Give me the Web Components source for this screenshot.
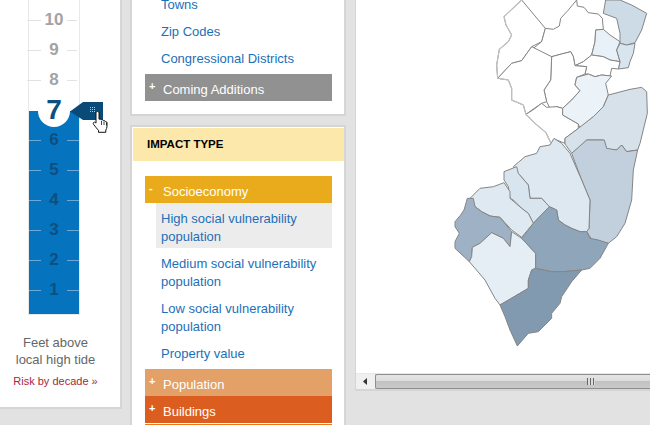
<!DOCTYPE html>
<html>
<head>
<meta charset="utf-8">
<title>Surging Seas</title>
<style>
  html, body { margin: 0; height: 425px; overflow: hidden; }
  body {
    display: flex;
    align-items: flex-start;
    gap: 9px;
    width: 650px;
    background: #e2e2e2;
    font-family: "Liberation Sans", Arial, sans-serif;
  }
  .col { display: flex; flex-direction: column; gap: 9px; width: 216px; height: 425px; overflow: hidden; flex: none; }
</style>
</head>
<body>
<risk-gauge level="7"></risk-gauge>

<div class="col">
  <side-panel style="margin-top:-13px">
    <nav-link>Towns</nav-link>
    <nav-link>Zip Codes</nav-link>
    <nav-link>Congressional Districts</nav-link>
    <nav-bar color="#919191">Coming Additions</nav-bar>
  </side-panel>
  <side-panel heading="IMPACT TYPE">
    <nav-bar color="#e9ab1b" open>Socioeconomy</nav-bar>
    <nav-link selected>High social vulnerability population</nav-link>
    <nav-link>Medium social vulnerability population</nav-link>
    <nav-link>Low social vulnerability population</nav-link>
    <nav-link>Property value</nav-link>
    <nav-bar color="#e3a067">Population</nav-bar>
    <nav-bar color="#db5e20" flush>Buildings</nav-bar>
    <nav-bar color="#e87a1d" style="margin-top:1px"></nav-bar>
  </side-panel>
</div>

<map-view></map-view>

<script>
// Sea level gauge with the draggable handle
class RiskGauge extends HTMLElement {
  connectedCallback() {
    const level = parseInt(this.getAttribute('level')) || 7;
    let rows = '';
    for (let n = 10; n >= 1; n--) {
      const cls = n === level ? 'row current' : (n > level ? 'row dry' : 'row wet');
      rows += `<div class="${cls}"><i></i><b>${n}</b><i></i></div>`;
    }
    this.attachShadow({ mode: 'open' }).innerHTML = `
<style>
  :host { display: block; flex: none; width: 120px; height: 407px; background: #fff;
    border-right: 2px solid #d5d5d5; border-bottom: 2px solid #d5d5d5;
    margin-right: -1px; color: #666; }
  .scale { position: relative; box-sizing: border-box; width: 52px; height: 315px; margin-left: 28px; padding: 5px 0 10px;
    border: solid #e8e8e8; border-width: 0 1px 1px;
    background: linear-gradient(#fff 111px, #0573bd 111px); }
  .row { display: grid; grid-template-columns: 12px 1fr 12px; align-items: center; height: 30px; }
  .row b { text-align: center; font-size: 17px; line-height: 30px; color: #0d4f80; }
  .row i { display: block; height: 1px; background: #6aa8d6; }
  .row.dry b { color: #a3a3a3; }
  .row.dry i { background: #e2e2e2; }
  .row.dry i:first-child { margin-left: -2px; }
  .row.dry i:last-child { margin-right: 2px; }
  .row.current i { visibility: hidden; }
  .row.current b { position: relative; z-index: 2; font-size: 28px; }
  .dot { position: absolute; left: 9px; top: 95px; width: 32px; height: 32px; border-radius: 50%; background: #fff; }
  .handle { position: absolute; left: 41px; top: 102px; }
  .cursor { position: absolute; left: 62px; top: 110px; }
  .caption { margin: 19px 0 0; padding-right: 9px; text-align: center; font-size: 13px; line-height: 17px; }
  .link { margin: 6px 0 0; padding-right: 9px; text-align: center; font-size: 11px; line-height: 14px; color: #a3283c; }
</style>
<div class="scale">
  <div class="dot"></div>
  ${rows}
  <svg class="handle" width="34" height="18" viewBox="0 0 34 18">
    <path d="M0 9.500 13 0H33V18H13Z" fill="#0a4a78"/>
    <g fill="#a9c6dc"><rect x="20" y="5" width="1" height="1"/><rect x="22" y="5" width="1" height="1"/><rect x="24" y="5" width="1" height="1"/>
    <rect x="20" y="7" width="1" height="1"/><rect x="22" y="7" width="1" height="1"/><rect x="24" y="7" width="1" height="1"/>
    <rect x="20" y="9" width="1" height="1"/><rect x="22" y="9" width="1" height="1"/><rect x="24" y="9" width="1" height="1"/></g>
  </svg>
  <svg class="cursor" width="20" height="24" viewBox="0 0 20 24">
    <path d="M6.500 1.500c1 0 1.500.7 1.500 1.700v6l1-.2c.8 0 1.200.3 1.400.8.8-.3 1.700 0 2 .8.8-.3 1.800.1 2 1 .8-.2 1.600.3 1.600 1.200v3.700c0 1.500-.7 2.500-1.200 3.500v2.300H7.500v-2c-1.500-1.500-3-3.500-5-6-.5-.8-.3-1.700.3-2 .7-.4 1.500 0 2.200.8V3.200c0-1 .5-1.700 1.500-1.700Z" fill="#fff" stroke="#111" stroke-width="1"/>
    <path d="M10.500 11v4M13 11.500v3.500M15.500 12.500v3" stroke="#111" stroke-width=".8" fill="none"/>
  </svg>
</div>
<p class="caption">Feet above<br>local high tide</p>
<p class="link">Risk by decade &raquo;</p>`;
  }
}
customElements.define('risk-gauge', RiskGauge);

// White card of the middle column
class SidePanel extends HTMLElement {
  constructor() {
    super();
    this.attachShadow({ mode: 'open' }).innerHTML = `
<style>
  :host { display: block; flex: none; box-sizing: border-box; background: #fff; border: 2px solid #d5d5d5; overflow: hidden; }
  :host([heading]) { height: 300px; border-bottom: 0; }
  header { margin: 1px 0 15px 1px; height: 33px; line-height: 33px; padding-left: 14px;
    background: #fde8ab; color: #000; font-size: 11.500px; font-weight: bold; }
  .body { display: flex; flex-direction: column; padding: 0 12px 13px 13px; }
</style>
<header></header>
<div class="body"><slot></slot></div>`;
  }

  connectedCallback() {
    const header = this.shadowRoot.querySelector('header');
    const heading = this.getAttribute('heading');
    if (heading) header.textContent = heading;
    else header.style.display = 'none';
  }
}
customElements.define('side-panel', SidePanel);

// Coloured accordion bar
class NavBar extends HTMLElement {
  connectedCallback() {
    const sign = this.hasAttribute('open') ? '-' : (this.textContent.trim() ? '+' : '');
    this.attachShadow({ mode: 'open' }).innerHTML = `
<style>
  :host { display: flex; flex: none; align-items: center; box-sizing: border-box; height: 27px; padding-top: 3px; color: #fff; font-size: 13px; margin-top: 4px; }
  :host([open]), :host([flush]) { margin-top: 0; }
  span { width: 18px; padding-left: 4px; box-sizing: border-box; font-size: 11px; font-weight: bold; margin-top: -6px; }
</style>
<span>${sign}</span><slot></slot>`;
    this.style.background = this.getAttribute('color');
  }
}
customElements.define('nav-bar', NavBar);

// Link row below a bar
class NavLink extends HTMLElement {
  constructor() {
    super();
    this.attachShadow({ mode: 'open' }).innerHTML = `
<style>
  :host { display: block; margin-left: 11px; padding: 7px 12px 2px 5px; font-size: 13px; line-height: 18px; color: #1c6fb8; }
  :host([selected]) { background: #ececec; }
</style>
<slot></slot>`;
  }
}
customElements.define('nav-link', NavLink);

// Choropleth of the counties, traced at 3x in page units from x=440
const COUNTIES = [
  ['#cddbe6', '497,0 490,40 530,55 540,100 540,130 560,135 585,128 605,90 620,40 575,15 540,0'],
  ['#fff', '245,0 316,85 305,125 275,140 245,182 215,190 173,235 170,195 178,148 205,125 215,105 198,75 192,50'],
  ['#fff', '316,85 340,88 358,78 362,55 385,30 410,0 412,18 432,22 445,38 475,42 487,55 490,88 467,90 465,125 455,165 430,185 405,197 400,170 392,155 365,162 335,170 300,162 280,145 305,125'],
  ['#e8f1f7', '467,90 490,88 510,105 540,125 530,150 540,185 510,180 490,170 455,165 465,125'],
  ['#d8e5ef', '530,150 540,130 560,135 585,130 580,160 570,185 565,203 535,207 540,185'],
  ['#fff', '430,185 455,165 490,170 510,180 540,185 535,207 515,205 510,228 485,225 465,230 445,222 435,222 440,200 405,197'],
  ['#fff', '335,170 365,162 392,155 400,170 405,197 440,200 435,222 410,232 405,255 420,272 395,300 368,325 350,320 330,325 320,305 312,270 332,240'],
  ['#fff', '173,235 215,190 245,182 275,140 335,170 332,240 312,270 320,305 305,310 283,325 258,343 250,315 215,300 215,265 205,240'],
  ['#fff', '258,343 283,327 305,310 320,322 350,320 368,325 368,345 415,372 415,385 375,415 375,430 345,418 333,430 318,398 285,370'],
  ['#ebf2f8', '410,232 445,222 465,230 485,225 515,228 497,250 505,285 490,320 460,350 420,385 415,372 368,345 368,325 395,300 420,272 405,255'],
  ['#d6e1ea', '505,285 570,268 605,262 620,275 622,340 600,430 593,450 560,455 545,435 530,450 500,448 490,420 440,420 420,440 395,460 375,432 375,415 415,385 460,350 490,320'],
  ['#c1d0dc', '395,460 440,420 493,420 500,445 530,450 545,435 560,455 593,450 580,510 575,600 555,670 530,710 505,730 475,722 455,718 440,695 447,685 450,600 425,540'],
  ['#dde8f1', '220,500 255,470 290,460 300,440 330,435 342,415 365,430 390,460 425,540 450,600 447,685 440,695 420,695 395,685 375,675 355,660 350,630 328,620 305,595 270,595 265,555 235,520'],
  ['#d8e4ee', '192,515 230,500 235,520 265,555 270,595 305,595 328,620 280,670 265,640 245,625 220,600 210,595 205,560 192,540'],
  ['#dfe9f2', '90,595 120,565 160,560 192,548 210,575 210,595 245,625 265,640 280,670 245,712 215,690 180,652 150,648 125,635 105,620'],
  ['#9fb1c4', '82,595 100,595 105,620 125,635 150,648 180,652 215,695 210,740 190,715 155,698 120,730 97,742 95,770 88,785 45,745 45,725 58,700 45,680 45,665 62,645 72,630'],
  ['#e6eef5', '88,785 95,770 97,742 120,730 155,698 190,715 210,740 215,695 245,715 287,760 287,805 275,810 265,840 265,865 180,915 165,895 135,840'],
  ['#8fa5ba', '245,715 280,670 328,620 350,630 355,660 375,675 395,685 420,695 440,695 450,715 475,720 505,730 480,775 450,805 425,810 370,815 335,815 310,810 287,805 287,760'],
  ['#829ab0', '180,915 265,865 265,840 275,810 287,805 335,815 370,815 425,810 395,845 365,890 360,910 335,940 335,955 295,995 265,1000 232,1038 210,990 195,950']
];
// the outer edge of the white counties is drawn lighter
const WEST_EDGE = '245,0 192,50 198,75 215,105 205,125 178,148 170,195 173,235 205,240 215,265 215,300 250,315 258,343 285,370 318,398 333,430';

class MapView extends HTMLElement {
  connectedCallback() {
    const shapes = COUNTIES.map(([fill, pts]) => `<polygon fill="${fill}" points="${pts}"/>`).join('');
    this.attachShadow({ mode: 'open' }).innerHTML = `
<style>
  :host { display: flex; flex-direction: column; flex: 1; height: 389px; background: #fff;
    border: solid #d5d5d5; border-width: 0 0 2px 1px; }
  .canvas { flex: 1; min-height: 0; overflow: hidden; padding-left: 84px; }
  svg { display: block; }
  .bar { display: flex; flex: none; height: 16px; box-sizing: border-box; background: #f0f0f0; border-top: 1px solid #e8e8e8; }
  .arrow { width: 19px; display: flex; align-items: center; justify-content: center; }
  .thumb { flex: 1; display: flex; align-items: center; padding-left: 211px;
    border: 1px solid #8e8e8e; border-right: 0; border-radius: 2px 0 0 2px;
    background: linear-gradient(#e4e4e4, #dcdcdc 45%, #c2c2c2 50%, #c9c9c9); }
  .grip { width: 8px; height: 7px; background: repeating-linear-gradient(90deg, #666 0 1px, #ddd 1px 3px); }
</style>
<div class="canvas">
  <svg width="210" height="380" viewBox="0 0 630 1140">
    <g stroke="#858585" stroke-width="3" stroke-linejoin="round">${shapes}</g>
    <polyline points="${WEST_EDGE}" fill="none" stroke="#c2c2c2" stroke-width="3.500"/>
  </svg>
</div>
<div class="bar">
  <div class="arrow"><svg width="5" height="7" viewBox="0 0 5 7"><path d="M4 0V7L0 3.500Z" fill="#333"/></svg></div>
  <div class="thumb"><div class="grip"></div></div>
</div>`;
  }
}
customElements.define('map-view', MapView);
</script>
</body>
</html>
